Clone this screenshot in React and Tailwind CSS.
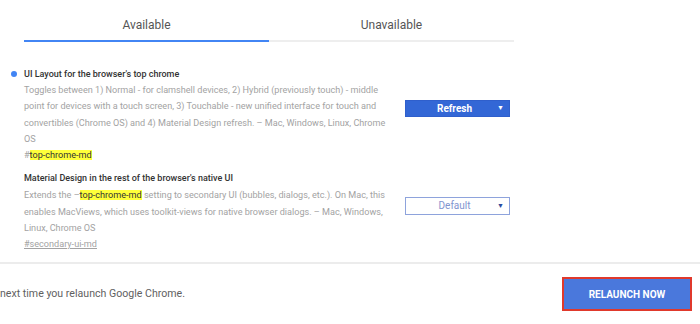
import React from 'react'

const Hl = ({ children }) => (
  <span className="bg-[#ffff3a] text-[#333]">{children}</span>
)

const Select = ({ label, active }) => (
  <div
    className={
      active
        ? 'w-[105px] h-[17px] flex items-center bg-[#3367d6] border border-[#2f5fcc] text-white font-bold'
        : 'w-[105px] h-[18px] flex items-center bg-white border border-[#8ea3dc] text-[#8194cf]'
    }
  >
    <span className="flex-1 text-center text-[10px] leading-none pl-[6px]">{label}</span>
    <span className={active ? 'text-[7px] pr-[5px] text-white' : 'text-[7px] pr-[5px] text-[#2b4a9e]'}>▼</span>
  </div>
)

const App = () => {
  return (
    <div className="w-[700px] h-[324px] bg-white overflow-hidden flex flex-col font-['Roboto',sans-serif]">
      <div className="w-[514px] pl-[24px]">
        <div className="flex h-[42px] border-b-2 border-[#eeeeee]">
          <div className="flex-1 flex items-center justify-center text-[12px] text-[#555] border-b-2 border-[#4285f4] -mb-[2px] pt-[10px]">
            Available
          </div>
          <div className="flex-1 flex items-center justify-center text-[12px] text-[#555] pt-[10px]">
            Unavailable
          </div>
        </div>

        <div className="flex mt-[24px]">
          <div className="w-[366px] whitespace-nowrap">
            <div className="flex items-center -ml-[13px] text-[9px] leading-[16px] font-medium text-[#333]">
              <span className="w-[6px] h-[6px] rounded-full bg-[#4285f4] mr-[7px]"></span>
              UI Layout for the browser's top chrome
            </div>
            <p className="text-[9.1px] leading-[16.3px] text-[#a3a3a3]">
              Toggles between 1) Normal - for clamshell devices, 2) Hybrid (previously touch) - middle<br />
              point for devices with a touch screen, 3) Touchable - new unified interface for touch and<br />
              convertibles (Chrome OS) and 4) Material Design refresh. – Mac, Windows, Linux, Chrome<br />
              OS
            </p>
            <p className="text-[9.1px] leading-[16.3px] text-[#a3a3a3]">
              #<Hl>top-chrome-md</Hl>
            </p>
          </div>
          <div className="ml-[15px] mt-[34px]">
            <Select label="Refresh" active />
          </div>
        </div>

        <div className="flex mt-[7px]">
          <div className="w-[366px] whitespace-nowrap">
            <div className="text-[9px] leading-[16px] font-medium text-[#333]">
              Material Design in the rest of the browser's native UI
            </div>
            <p className="text-[9.1px] leading-[16.3px] text-[#a3a3a3] mt-[1px]">
              Extends the –<Hl>top-chrome-md</Hl> setting to secondary UI (bubbles, dialogs, etc.). On Mac, this<br />
              enables MacViews, which uses toolkit-views for native browser dialogs. – Mac, Windows,<br />
              Linux, Chrome OS
            </p>
            <p className="text-[9.1px] leading-[16.3px] text-[#a3a3a3] underline">#secondary-ui-md</p>
          </div>
          <div className="ml-[15px] mt-[27px]">
            <Select label="Default" />
          </div>
        </div>
      </div>

      <div className="mt-auto h-[62px] border-t-2 border-[#ececec] flex items-center justify-between pr-[8px]">
        <span className="text-[10.6px] text-[#5f5f5f]">next time you relaunch Google Chrome.</span>
        <button className="w-[130px] h-[34px] bg-[#4a78dc] border-2 border-[#e0392c] text-white text-[10px] font-bold uppercase">
          Relaunch now
        </button>
      </div>
    </div>
  )
}

export default App
